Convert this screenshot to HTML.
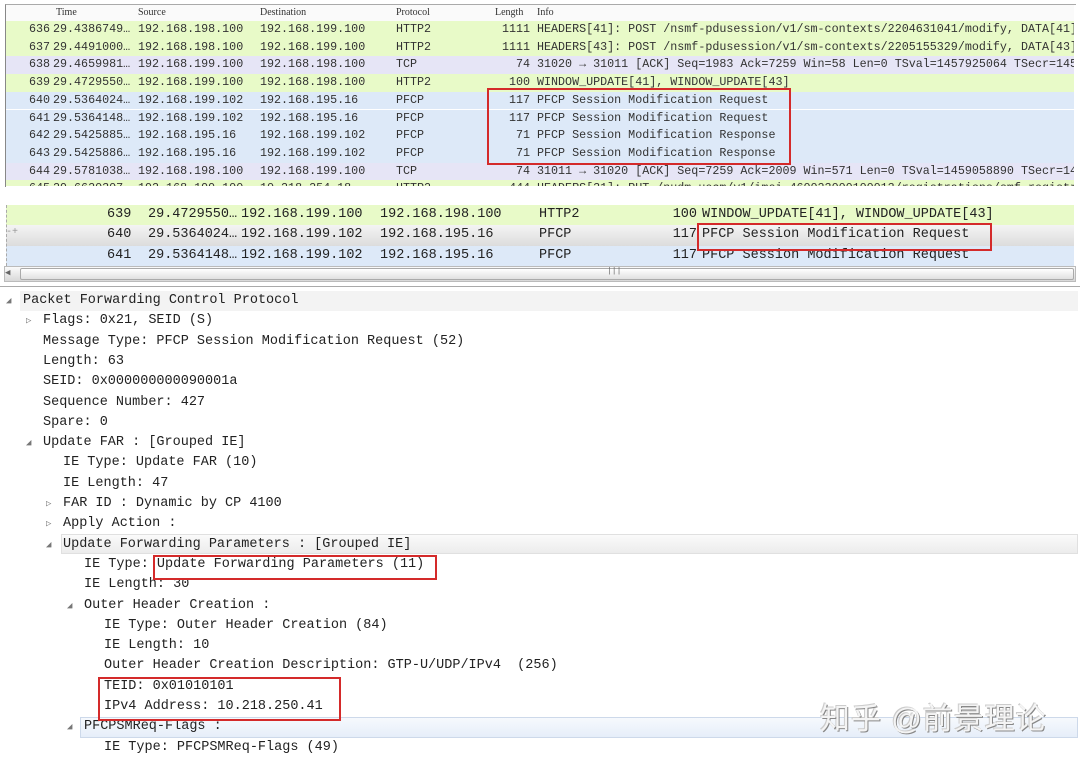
<!DOCTYPE html>
<html><head><meta charset="utf-8"><style>
body{margin:0;width:1080px;height:760px;background:#fff;position:relative;overflow:hidden;font-family:"Liberation Mono",monospace;color:#222}
.a{position:absolute;white-space:pre}
.r{position:absolute;left:6px;width:1068px;height:17.7px}
.t{font-size:11.7px;line-height:17.7px;color:#333}
.g{background:#e8fac8}.p{background:#e6e5f6}.b{background:#dde9f8}
.box{position:absolute;border:2px solid #d42a2a}
.tr{font-size:13.5px;line-height:20.3px;color:#222}
.ar{position:absolute;font-size:9px;color:#777}
.hd{position:absolute;top:6px;font-size:10px;line-height:14px;font-family:"Liberation Serif",serif;color:#333;white-space:pre}
</style></head><body>
<div class="a" style="left:5px;top:4px;width:1070px;height:182px;border-left:1px solid #888;border-top:1px solid #aaa"></div>
<div class="r" style="top:5px;height:16px;background:#fafafa;border-bottom:1px solid #ddd"></div>
<span class="hd" style="left:56px">Time</span><span class="hd" style="left:138px">Source</span><span class="hd" style="left:260px">Destination</span><span class="hd" style="left:396px">Protocol</span><span class="hd" style="left:495px">Length</span><span class="hd" style="left:537px">Info</span>
<div id="toprows"></div>
<div class="box" style="left:487px;top:88px;width:300px;height:73px"></div>

<div class="r g" style="top:205px;left:6px;height:20px"></div>
<div class="r" style="top:225px;left:6px;height:21px;background:linear-gradient(#f4f4f4,#dcdcdc)"></div>
<div class="r b" style="top:246px;left:6px;height:20px"></div>
<div class="a" style="left:6px;top:205px;height:61px;border-left:1px dashed #aaa"></div>
<div id="mid"></div>
<div class="box" style="left:697px;top:223px;width:291px;height:24px"></div>
<div class="a" style="left:4px;top:266px;width:1072px;height:16px;background:linear-gradient(#fafafa,#d8d8d8);border:1px solid #bbb;box-sizing:border-box"></div>
<div class="a" style="left:20px;top:268px;width:1054px;height:12px;background:linear-gradient(#fff,#e0e0e0);border:1px solid #aaa;border-radius:2px;box-sizing:border-box"></div>
<div class="a" style="left:607px;top:267px;font-size:8px;color:#666">|||</div>
<div class="a" style="left:5px;top:268px;font-size:9px;color:#666">&#9664;</div>
<div class="a" style="left:0;top:286px;width:1080px;height:1px;background:#aaa"></div>
<div class="a" style="left:20px;top:291px;width:1058px;height:20px;background:#f3f3f3"></div>
<div class="a" style="left:61px;top:534px;width:1017px;height:20px;background:linear-gradient(#fafafa,#ececec);border:1px solid #e0e0e0;box-sizing:border-box"></div>
<div class="a" style="left:80px;top:717px;width:998px;height:21px;background:linear-gradient(#f6f9fd,#e6eef9);border:1px solid #cdd9ea;box-sizing:border-box"></div>
<div id="tree"></div>
<div class="box" style="left:153px;top:555px;width:280px;height:21px"></div>
<div class="box" style="left:98px;top:677px;width:239px;height:40px"></div>
<div class="a" style="left:820px;top:694px;font-family:'Liberation Sans','Noto Sans CJK SC',sans-serif;font-size:30px;letter-spacing:1px;color:#f4f4f4;text-shadow:1px 1px 0 #888,-1px -1px 0 #ccc">知乎 @前景理论</div>
<script>
var T=[["g","636","29.4386749…","192.168.198.100","192.168.199.100","HTTP2","1111","HEADERS[41]: POST /nsmf-pdusession/v1/sm-contexts/2204631041/modify, DATA[41]"],
["g","637","29.4491000…","192.168.198.100","192.168.199.100","HTTP2","1111","HEADERS[43]: POST /nsmf-pdusession/v1/sm-contexts/2205155329/modify, DATA[43]"],
["p","638","29.4659981…","192.168.199.100","192.168.198.100","TCP","74","31020 → 31011 [ACK] Seq=1983 Ack=7259 Win=58 Len=0 TSval=1457925064 TSecr=145"],
["g","639","29.4729550…","192.168.199.100","192.168.198.100","HTTP2","100","WINDOW_UPDATE[41], WINDOW_UPDATE[43]"],
["b","640","29.5364024…","192.168.199.102","192.168.195.16","PFCP","117","PFCP Session Modification Request"],
["b","641","29.5364148…","192.168.199.102","192.168.195.16","PFCP","117","PFCP Session Modification Request"],
["b","642","29.5425885…","192.168.195.16","192.168.199.102","PFCP","71","PFCP Session Modification Response"],
["b","643","29.5425886…","192.168.195.16","192.168.199.102","PFCP","71","PFCP Session Modification Response"],
["p","644","29.5781038…","192.168.198.100","192.168.199.100","TCP","74","31011 → 31020 [ACK] Seq=7259 Ack=2009 Win=571 Len=0 TSval=1459058890 TSecr=14"],
["g","645","29.6620307…","192.168.199.100","10.218.254.18","HTTP2","444","HEADERS[31]: PUT /nudm-uecm/v1/imsi-460023000100013/registrations/smf-registrat"]];
var h="";T.forEach(function(r,i){var y=21+i*17.7;
h+='<div class="r '+r[0]+'" style="top:'+y+'px;'+(i==9?'height:6px;':'')+'"></div><div class="a t" style="top:'+y+'px;left:0;width:1074px;height:'+(i==9?6:18)+'px;overflow:hidden">'+
'<span class="a" style="right:1024px">'+r[1]+'</span><span class="a" style="left:53px">'+r[2]+'</span><span class="a" style="left:138px">'+r[3]+'</span><span class="a" style="left:260px">'+r[4]+'</span><span class="a" style="left:396px">'+r[5]+'</span><span class="a" style="right:544px">'+r[6]+'</span><span class="a" style="left:537px">'+r[7]+'</span></div>';});
document.getElementById("toprows").innerHTML=h;
var M=[["639","29.4729550…","192.168.199.100","192.168.198.100","HTTP2","100","WINDOW_UPDATE[41], WINDOW_UPDATE[43]"],
["640","29.5364024…","192.168.199.102","192.168.195.16","PFCP","117","PFCP Session Modification Request"],
["641","29.5364148…","192.168.199.102","192.168.195.16","PFCP","117","PFCP Session Modification Request"]];
h="";M.forEach(function(r,i){var y=205+i*20.3;
h+='<div class="a tr" style="top:'+y+'px;left:0;width:1080px;height:20px">'+
'<span class="a" style="left:107px">'+r[0]+'</span><span class="a" style="left:148px">'+r[1]+'</span><span class="a" style="left:241px">'+r[2]+'</span><span class="a" style="left:380px">'+r[3]+'</span><span class="a" style="left:539px">'+r[4]+'</span><span class="a" style="right:383px">'+r[5]+'</span><span class="a" style="left:702px">'+r[6]+'</span></div>';});
h+='<div class="a" style="left:6px;top:227px;font-size:10px;color:#999">-+</div>';
document.getElementById("mid").innerHTML=h;
var R=[[0,"o","Packet Forwarding Control Protocol"],[1,"c","Flags: 0x21, SEID (S)"],[1,"","Message Type: PFCP Session Modification Request (52)"],[1,"","Length: 63"],[1,"","SEID: 0x000000000090001a"],[1,"","Sequence Number: 427"],[1,"","Spare: 0"],[1,"o","Update FAR : [Grouped IE]"],[2,"","IE Type: Update FAR (10)"],[2,"","IE Length: 47"],[2,"c","FAR ID : Dynamic by CP 4100"],[2,"c","Apply Action :"],[2,"o","Update Forwarding Parameters : [Grouped IE]"],[3,"","IE Type: Update Forwarding Parameters (11)"],[3,"","IE Length: 30"],[3,"o","Outer Header Creation :"],[4,"","IE Type: Outer Header Creation (84)"],[4,"","IE Length: 10"],[4,"","Outer Header Creation Description: GTP-U/UDP/IPv4  (256)"],[4,"","TEID: 0x01010101"],[4,"","IPv4 Address: 10.218.250.41"],[3,"o","PFCPSMReq-Flags :"],[4,"","IE Type: PFCPSMReq-Flags (49)"]];
h="";R.forEach(function(r,i){var y=291+i*20.3;var x=[23,43,63,84,104][r[0]];
if(r[1])h+='<div class="ar" style="left:'+(x-17)+'px;top:'+(y+5)+'px">'+(r[1]=="o"?"&#9698;":"&#9655;")+'</div>';
h+='<div class="a tr" style="left:'+x+'px;top:'+y+'px">'+r[2]+'</div>';});
document.getElementById("tree").innerHTML=h;
</script>
</body></html>
